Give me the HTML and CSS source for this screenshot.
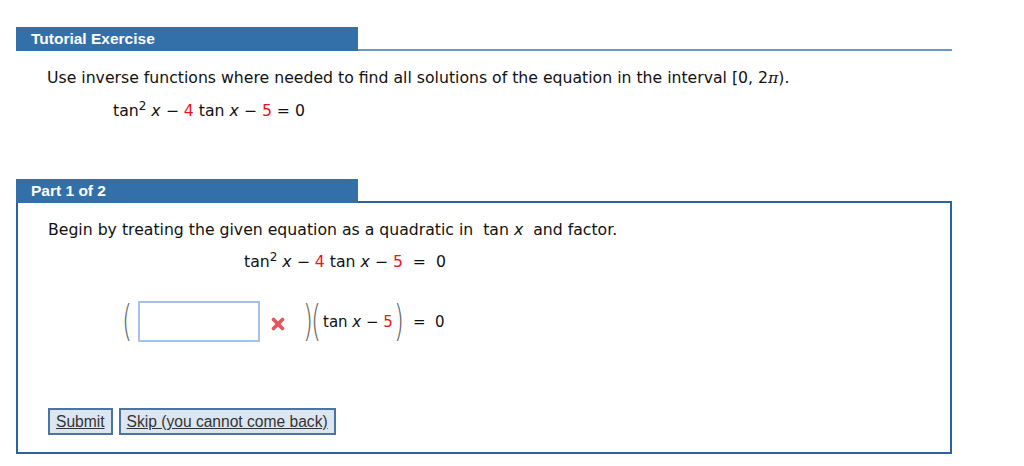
FILE: index.html
```html
<!DOCTYPE html>
<html>
<head>
<meta charset="utf-8">
<link rel="stylesheet" href="styles.css">
</head>
<body>
<div class="page">
  <div class="head-row">
    <div class="tab">Tutorial Exercise</div>
  </div>
  <p class="prompt">Use inverse functions where needed to find all solutions of the equation in the interval [0, 2<i class="pi">π</i>).</p>
  <div class="eq eq-main">tan<sup>2</sup> <i>x</i> − <span class="red">4</span> tan <i>x</i> − <span class="red">5</span> = 0</div>

  <div class="head-row part-row">
    <div class="tab">Part 1 of 2</div>
  </div>
  <div class="part-box">
    <p class="prompt">Begin by treating the given equation as a quadratic in &nbsp;tan <i>x</i> &nbsp;and factor.</p>
    <div class="eq eq-part">tan<sup>2</sup> <i>x</i> − <span class="red">4</span> tan <i>x</i> − <span class="red">5</span> &nbsp;= &nbsp;0</div>
    <div class="factor">
      <span class="paren">(</span>
      <span class="answer"></span>
      <svg class="wrong" width="14" height="14" viewBox="0 0 14 14"><path d="M2.5 2.5 L11.5 11.5 M11.5 2.5 L2.5 11.5" stroke="#e8545a" stroke-width="3.6" stroke-linecap="round"/></svg>
      <span class="paren paren-mid">)</span>
      <span class="paren">(</span>
      <span class="inner">tan <i>x</i> − <span class="red">5</span></span>
      <span class="paren paren-end">)</span>
      <span class="rhs">= &nbsp;0</span>
    </div>
    <div class="buttons">
      <button class="btn">Submit</button>
      <button class="btn">Skip (you cannot come back)</button>
    </div>
  </div>
</div>
</body>
</html>
```
FILE: styles.css
```css
html, body {
  margin: 0;
  padding: 0;
  background: #ffffff;
}
body {
  font-family: "DejaVu Sans", Verdana, sans-serif;
  color: #111;
}
.page {
  width: 936px;
  margin-left: 16px;
  padding-top: 27px;
}
.head-row {
  border-bottom: 2px solid #6b95c6;
  display: flex;
}
.tab {
  width: 342px;
  height: 24px;
  box-sizing: border-box;
  background: #336fa8;
  color: #fff;
  font-family: "Liberation Sans", Arial, sans-serif;
  font-weight: bold;
  font-size: 15.5px;
  line-height: 24px;
  padding-left: 15px;
  margin-bottom: -2px;
}
.prompt {
  margin: 0;
  font-size: 15.7px;
  padding-left: 31px;
  padding-top: 17px;
  line-height: 20px;
}
.pi { font-family: "DejaVu Serif", serif; }
.eq {
  font-size: 15.7px;
  line-height: 20px;
}
.eq sup {
  font-size: 12px;
  line-height: 0;
  vertical-align: 6px;
}
.red { color: #e8161c; }
.eq-main {
  padding-left: 97px;
  padding-top: 13px;
  padding-bottom: 58px;
}
.part-row {
  border-bottom: 2px solid #2b63a0;
}
.part-box {
  border: 2px solid #2b63a0;
  border-top: none;
  height: 251px;
  box-sizing: border-box;
}
.part-box .prompt {
  padding-left: 30px;
  padding-top: 17px;
}
.eq-part {
  padding-left: 226px;
  padding-top: 12px;
}
.factor {
  display: flex;
  align-items: center;
  padding-left: 105px;
  margin-top: 29px;
  height: 41px;
  font-size: 15px;
}
.paren {
  font-family: "DejaVu Sans", sans-serif;
  font-weight: 200;
  font-size: 43px;
  color: #666;
  line-height: 41px;
  width: 8px;
  display: flex;
  justify-content: center;
  transform: scaleX(0.6);
}
.answer {
  width: 122px;
  height: 41px;
  box-sizing: border-box;
  border: 2px solid #a5c2e4;
  margin-left: 7px;
  background: #fff;
}
.wrong { margin-left: 11px; margin-top: 4px; }
.paren-mid { margin-left: 19px; }
.inner { margin-left: 3px; }
.paren-end { margin-left: 2px; }
.rhs { margin-left: 10px; }
.buttons {
  display: flex;
  gap: 6px;
  padding-left: 30px;
  margin-top: 66px;
}
.btn {
  font-family: "Liberation Sans", Arial, sans-serif;
  font-size: 15.6px;
  color: #333;
  text-decoration: underline;
  background: #dce6f1;
  border: 2px solid #4d73a3;
  height: 27px;
  padding: 0 6px;
  margin: 0;
  border-radius: 0;
}
```
